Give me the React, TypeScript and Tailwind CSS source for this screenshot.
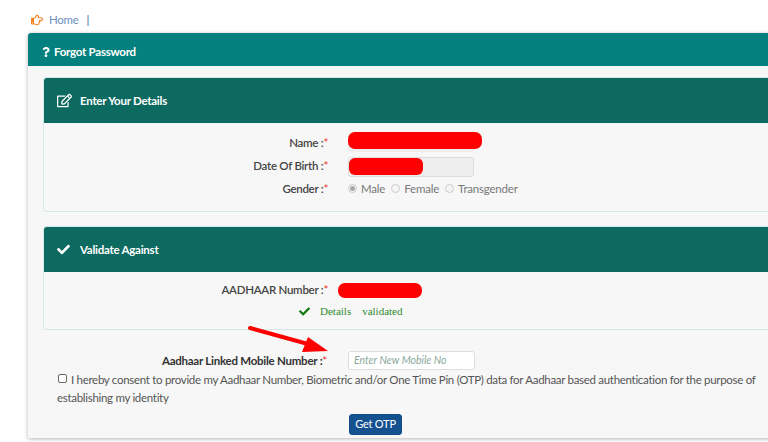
import { FaCheck, FaQuestion, FaRegEdit, FaRegHandPointRight } from 'react-icons/fa';

function Label({ text, bold }: { text: string; bold?: boolean }) {
  return (
    <div className={`text-right text-[11.5px] leading-[16px] ${bold ? 'pt-[1px] font-bold tracking-[-0.25px] text-[#333]' : 'font-semibold tracking-[-0.28px] text-[#444]'}`}>
      {text} :<span className="font-normal text-[#e33]">*</span>
    </div>
  );
}

function Radio({ label, checked }: { label: string; checked?: boolean }) {
  return (
    <span className="flex items-center gap-[4px]">
      <span className="flex h-[9px] w-[9px] items-center justify-center rounded-full border border-[#ccc] bg-[#f4f4f4]">
        {checked && <span className="h-[5px] w-[5px] rounded-full bg-[#aaa]" />}
      </span>
      <span>{label}</span>
    </span>
  );
}

function SectionHead({ icon, title }: { icon: React.ReactNode; title: string }) {
  return (
    <div className="flex h-[45px] items-center rounded-t-[3px] bg-[#0c6a60] pl-[13px] text-white">
      <span className="flex w-[23px] items-center">{icon}</span>
      <span className="text-[11.5px] font-bold tracking-[-0.25px]">{title}</span>
    </div>
  );
}

export default function App() {
  return (
    <div
      className="h-[442px] w-[768px] overflow-hidden bg-white"
      style={{ fontFamily: 'Lato, "Noto Sans", sans-serif' }}
    >
      {/* breadcrumb */}
      <div className="flex h-[33px] items-center pl-[31px] pt-[7px] text-[11.5px] tracking-[-0.3px] text-[#6f8fc0]">
        <FaRegHandPointRight className="mr-[6px] text-[12px] text-[#f58220]" />
        <span>Home</span>
        <span className="ml-[8px] text-[#3a62a0]">|</span>
      </div>

      <div className="ml-[28px] h-[405px] w-[800px] rounded-t-[3px] bg-[#f7f7f7] shadow-[0_1px_4px_rgba(0,0,0,0.3)]">
        <div className="flex h-[33px] items-center gap-[3px] rounded-t-[3px] bg-[#04807e] pl-[13px] pt-[4px] text-[11.5px] font-bold tracking-[-0.25px] text-white">
          <FaQuestion className="text-[10px]" />
          <span>Forgot Password</span>
        </div>

        <div className="px-[15px] pt-[11px]">
          <div className="h-[135px] rounded-[3px] border border-[#d3e8ea]">
            <SectionHead icon={<FaRegEdit className="text-[15px]" />} title="Enter Your Details" />
            <div className="grid grid-cols-[284px_1fr] items-center gap-x-[20px] pt-[9px]">
              <div className="h-[20px] pt-[3px]"><Label text="Name" /></div>
              <div className="relative h-[20px] w-[126px] rounded-[3px] bg-[#eee]">
                <div className="absolute left-0 top-0 h-[17px] w-[134px] rounded-[7px] bg-[#ff0000]" />
              </div>
              <div className="mt-[3px] h-[20px] pt-[2px]"><Label text="Date Of Birth" /></div>
              <div className="relative mt-[5px] h-[20px] w-[126px] rounded-[3px] border border-[#ddd] bg-[#eee]">
                <div className="absolute left-0 top-0 h-[17px] w-[74px] rounded-[6px] bg-[#ff0000]" />
              </div>
              <div className="mt-[2px] h-[20px] pt-[2px]"><Label text="Gender" /></div>
              <div className="mt-[1px] flex items-center gap-[6px] text-[11.5px] tracking-[-0.2px] text-[#777]">
                <Radio label="Male" checked />
                <Radio label="Female" />
                <Radio label="Transgender" />
              </div>
            </div>
          </div>

          <div className="mt-[14px] h-[104px] rounded-[3px] border border-[#d3e8ea]">
            <SectionHead icon={<FaCheck className="text-[13px]" />} title="Validate Against" />
            <div className="grid grid-cols-[284px_1fr] items-center gap-x-[10px] pt-[10px]">
              <Label text="AADHAAR Number" />
              <div className="h-[15px] w-[84px] rounded-[7px] bg-[#ff0000]" />
            </div>
            <div className="mt-[5px] flex items-center pl-[255px] text-[11px] text-[#2e8b2e]" style={{ fontFamily: '"Liberation Serif", serif' }}>
              <FaCheck className="mr-[10px] text-[11px] text-[#0b7a0b]" />
              <span>Details</span>
              <span className="ml-[11px]">validated</span>
            </div>
          </div>

          <div className="relative mt-[21px] grid grid-cols-[284px_1fr] items-center gap-x-[21px]">
            <Label text="Aadhaar Linked Mobile Number" bold />
            <div className="flex h-[19px] w-[127px] items-center rounded-[3px] border border-[#ddd] bg-white pl-[5px] text-[10.5px] italic text-[#8aa89a]">
              Enter New Mobile No
            </div>
            <svg className="absolute left-[200px] top-[-26px]" width="100" height="40" viewBox="0 0 100 40">
              <path d="M7 3 L65 19" stroke="#ff0000" strokeWidth="4" strokeLinecap="round" fill="none" />
              <path d="M65 12 L59 27 L85 26 Z" fill="#ff0000" />
            </svg>
          </div>

          <div className="ml-[14px] mt-[1px] w-[705px] text-[11.5px] leading-[18px] tracking-[-0.3px] text-[#555]">
            <span className="ml-[1px] mr-[4px] inline-block h-[9px] w-[9px] rounded-[2px] border border-[#666] bg-white align-[1px]" />
            I hereby consent to provide my Aadhaar Number, Biometric and/or One Time Pin (OTP) data for Aadhaar based authentication for the purpose of establishing my identity
          </div>

          <div className="mt-[7px] flex justify-start pl-[306px]">
            <button className="h-[21px] w-[53px] rounded-[3px] border border-[#0f4c8a] bg-[#15508f] text-[11px] tracking-[-0.2px] text-white">
              Get OTP
            </button>
          </div>
        </div>
      </div>
    </div>
  );
}
